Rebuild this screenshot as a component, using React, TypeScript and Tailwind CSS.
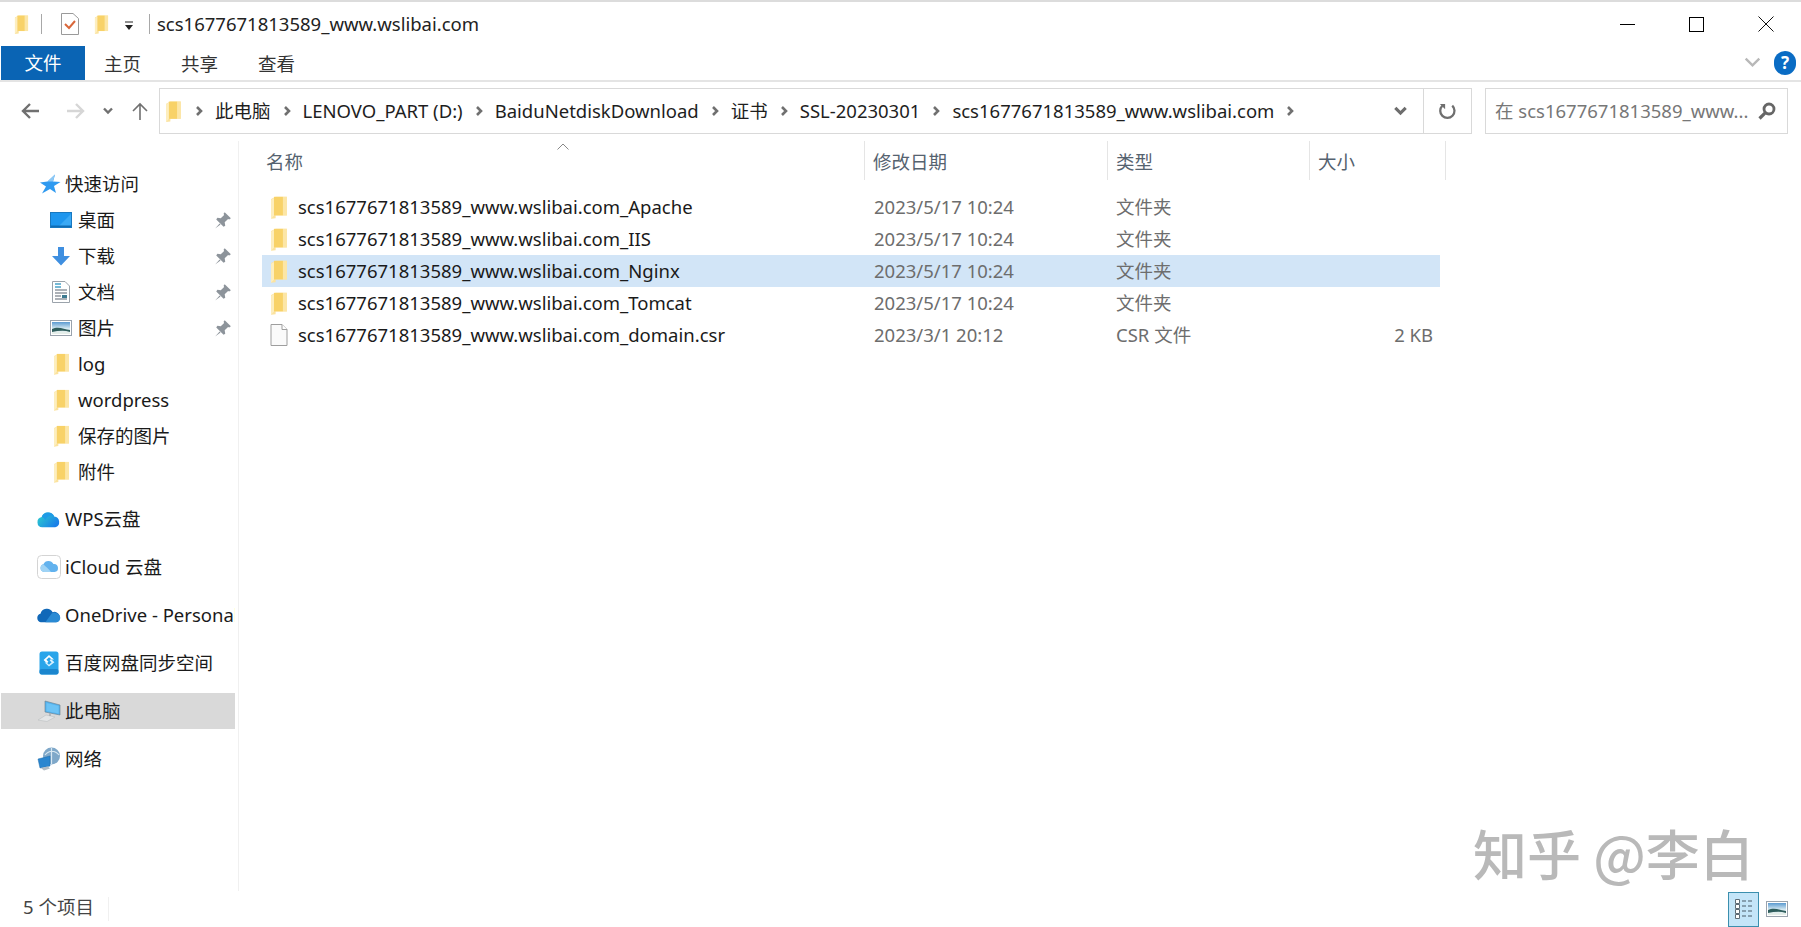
import React from "react";

const FONT = "[font-family:'Noto_Sans','Noto_Sans_CJK_SC',sans-serif]";

function Folder({ className = "" }: { className?: string }) {
  return (
    <svg viewBox="0 0 16 22" className={className} aria-hidden="true">
      <path d="M1 3.5 L5 1.5 L15 1.5 L15 18 L5 18 L5 20.5 L1 21 Z" fill="#fbe3a0" />
      <path d="M3.5 1.5 H11.5 V18 H3.5 Z" fill="#f8d268" />
      <path d="M11.5 1.5 H15 V18 H11.5 Z" fill="#fce6a6" />
      <path d="M1 4 L3.5 2.5 V18 L1 21 Z" fill="#fdeebf" />
    </svg>
  );
}

function FileIcon({ className = "" }: { className?: string }) {
  return (
    <svg viewBox="0 0 18 22" className={className} aria-hidden="true">
      <path d="M1 .5H12L17 5.5V21.5H1Z" fill="#fafafa" stroke="#9e9e9e" />
      <path d="M12 .5V5.5H17" fill="#fff" stroke="#9e9e9e" />
    </svg>
  );
}

function Chevron() {
  return (
    <svg viewBox="0 0 8 12" className="w-[8px] h-[12px] shrink-0" aria-hidden="true">
      <path d="M2 2 L6 6 L2 10" fill="none" stroke="#707070" strokeWidth="2.6" />
    </svg>
  );
}

function Pin() {
  return (
    <svg viewBox="0 0 16 16" className="w-[18px] h-[18px] shrink-0" aria-hidden="true">
      <path d="M9.5 1 L15 6.5 L13.5 7.5 L12.5 7 L9.5 10 L10 13 L8.5 14 L2 7.5 L3 6 L6 6.5 L9 3.5 L8.5 2.5 Z M5 11 L1 15.5 L5.8 12 Z" fill="#8d949b" />
    </svg>
  );
}

function Arrow({ dir, color }: { dir: "left" | "right" | "up"; color: string }) {
  const d =
    dir === "left"
      ? "M19 10H3M10 3L3 10L10 17"
      : dir === "right"
      ? "M1 10H17M10 3L17 10L10 17"
      : "M10 19V3M3 10L10 3L17 10";
  return (
    <svg viewBox="0 0 20 20" className="w-[20px] h-[20px]" aria-hidden="true">
      <path d={d} fill="none" stroke={color} strokeWidth={dir === "up" ? 1.6 : 2.4} />
    </svg>
  );
}

function SmallDown({ color = "#707070", w = 10, sw = 2.4 }: { color?: string; w?: number; sw?: number }) {
  return (
    <svg viewBox="0 0 10 8" style={{ width: w }} aria-hidden="true">
      <path d="M1 1.5 L5 5.5 L9 1.5" fill="none" stroke={color} strokeWidth={sw} />
    </svg>
  );
}

function Star() {
  return (
    <svg viewBox="0 0 22 20" className="w-[22px] h-[20px]" aria-hidden="true">
      <path d="M16 .5 L14 7.5 L21.5 8 L15 12 L17 19 L11 15 L3 19.5 L7 12.5 L1 8.5 L8.5 7.5 Z" fill="#2f9af0" />
      <path d="M16 .5 L14 7.5 L8.5 7.5 Z" fill="#8fc9f5" />
    </svg>
  );
}

function Desktop() {
  return (
    <svg viewBox="0 0 22 16" className="w-[22px] h-[16px]" aria-hidden="true">
      <rect x="0.5" y="0.5" width="21" height="15" fill="#1e96ee" stroke="#1878c0" />
      <path d="M8 15 L21 2 V15 Z" fill="#3aa9f5" />
      <rect x="1" y="13.5" width="20" height="1.5" fill="#0f6cb4" />
    </svg>
  );
}

function Download() {
  return (
    <svg viewBox="0 0 20 20" className="w-[20px] h-[20px]" aria-hidden="true">
      <path d="M7 1H13V10H19L10 19.5L1 10H7Z" fill="#3f8fe0" />
    </svg>
  );
}

function Doc() {
  return (
    <svg viewBox="0 0 18 22" className="w-[18px] h-[22px]" aria-hidden="true">
      <path d="M.5.5H13L17.5 5V21.5H.5Z" fill="#fff" stroke="#9ba3ab" />
      <path d="M3 3H9M3 6H9" stroke="#4aa3c8" strokeWidth="1.4" />
      <path d="M3 9H15M3 12H15M3 15H9M3 18H15" stroke="#5b6570" strokeWidth="1.2" />
      <rect x="10" y="14" width="5" height="3" fill="#3d7a90" />
    </svg>
  );
}

function Picture({ id }: { id: string }) {
  return (
    <svg viewBox="0 0 22 16" className="w-[22px] h-[16px]" aria-hidden="true">
      <defs>
        <linearGradient id={id} x1="0" y1="0" x2="0" y2="1">
          <stop offset="0" stopColor="#5b9ad0" />
          <stop offset="0.55" stopColor="#d6eaf2" />
          <stop offset="1" stopColor="#e8efe8" />
        </linearGradient>
      </defs>
      <rect x="0.5" y="0.5" width="21" height="15" fill="#fff" stroke="#9aa3ad" />
      <rect x="2" y="2" width="18" height="12" fill={`url(#${id})`} />
      <path d="M2 9 C8 6 14 9 20 10 V12 C14 10 8 11 2 12 Z" fill="#2f5d5c" />
    </svg>
  );
}

function WpsCloud() {
  return (
    <svg viewBox="0 0 24 16" className="w-[25px] h-[17px]" aria-hidden="true">
      <defs>
        <linearGradient id="wps" x1="0" y1="0" x2="1" y2="0.6">
          <stop offset="0" stopColor="#2ed3cc" />
          <stop offset="1" stopColor="#1a7fe8" />
        </linearGradient>
      </defs>
      <path d="M6 15.5 A5 5 0 0 1 5.5 5.6 A6.5 6.5 0 0 1 17.5 5 A5.4 5.4 0 0 1 18.5 15.5 Z" fill="url(#wps)" />
      <path d="M5.5 5.6 A6.5 6.5 0 0 1 17.5 5 A6 6 0 0 0 9 8.5 A5 5 0 0 0 5.5 5.6Z" fill="#1f9be6" />
    </svg>
  );
}

function ICloud() {
  return (
    <svg viewBox="0 0 24 24" className="w-[24px] h-[24px]" aria-hidden="true">
      <rect x="0.5" y="0.5" width="23" height="23" rx="4" fill="#fff" stroke="#d4d4d4" />
      <path d="M7 17 A4 4 0 0 1 6.4 9.2 A5.5 5.5 0 0 1 16.4 9 A4 4 0 0 1 17.5 17 Z" fill="#62b2ee" />
      <path d="M7 17 A4 4 0 0 1 6.4 9.2 C9 12 12 14 14 17 Z" fill="#9fd3f5" />
    </svg>
  );
}

function OneDrive() {
  return (
    <svg viewBox="0 0 24 15" className="w-[26px] h-[16px]" aria-hidden="true">
      <path d="M4.5 14.5 A4.3 4.3 0 0 1 4.3 6.2 A6.3 6.3 0 0 1 16 4.8 A5 5 0 0 1 19.5 14.5 Z" fill="#1168b8" />
      <path d="M9 14.5 L19.5 14.5 A4.2 4.2 0 0 0 21 6.6 A5 5 0 0 0 15 6 Z" fill="#2a8ad4" />
    </svg>
  );
}

function BaiduSync() {
  return (
    <svg viewBox="0 0 20 24" className="w-[20px] h-[24px]" aria-hidden="true">
      <rect x="0.5" y="0.5" width="19" height="23" rx="2.5" fill="#2aa5ea" />
      <rect x="0.5" y="18" width="19" height="5.5" rx="2" fill="#1b86ce" />
      <path d="M10 4 L15 8.5 L12.8 8.5 L10 6.2 L7.4 8.8 L9.4 10.8 L7.9 12.3 L4.6 9 Z" fill="#fff" />
      <path d="M10 15.6 L5.6 11.6 L7.5 11.6 L10 13.7 L12.6 11.2 L10.6 9.4 L12 8 L15.4 11.2 Z" fill="#d7f1ff" />
    </svg>
  );
}

function Computer() {
  return (
    <svg viewBox="0 0 24 22" className="w-[24px] h-[22px]" aria-hidden="true">
      <path d="M8 1 L23 5 V15 L8 12 Z" fill="#54b2ee" stroke="#6a7d8c" strokeWidth="0.6" />
      <path d="M9.5 3 L21.6 6 V13.4 L9.5 11 Z" fill="#6cc3f5" />
      <path d="M1 20 L9 15 L18 17 L10 21.5 Z" fill="#e3e5e6" stroke="#b7babd" strokeWidth="0.5" />
      <path d="M13 13 V16" stroke="#a8adb1" strokeWidth="1.5" />
    </svg>
  );
}

function Network() {
  return (
    <svg viewBox="0 0 24 24" className="w-[24px] h-[24px]" aria-hidden="true">
      <circle cx="14.5" cy="9" r="8.5" fill="#7fa8c9" />
      <path d="M8 8 C12 3 18 3 22 8 M14.5 1 V17" stroke="#d9e8f2" strokeWidth="1.2" fill="none" />
      <path d="M1 12 L13 9 V19 L3 21 Z" fill="#2a86d0" stroke="#1d6aa8" strokeWidth="0.5" />
      <path d="M4 21 L11 19.5 L13 21.5 L7 23.5 Z" fill="#b3bcc4" />
    </svg>
  );
}

const quick: { label: string; icon: React.ReactNode; pin?: boolean }[] = [
  { label: "桌面", icon: <Desktop />, pin: true },
  { label: "下载", icon: <Download />, pin: true },
  { label: "文档", icon: <Doc />, pin: true },
  { label: "图片", icon: <Picture id="side-pic" />, pin: true },
  { label: "log", icon: <Folder className="w-[17px] h-[24px]" /> },
  { label: "wordpress", icon: <Folder className="w-[17px] h-[24px]" /> },
  { label: "保存的图片", icon: <Folder className="w-[17px] h-[24px]" /> },
  { label: "附件", icon: <Folder className="w-[17px] h-[24px]" /> },
];

const roots: { label: string; icon: React.ReactNode; active?: boolean }[] = [
  { label: "WPS云盘", icon: <WpsCloud /> },
  { label: "iCloud 云盘", icon: <ICloud /> },
  { label: "OneDrive - Personal", icon: <OneDrive /> },
  { label: "百度网盘同步空间", icon: <BaiduSync /> },
  { label: "此电脑", icon: <Computer />, active: true },
  { label: "网络", icon: <Network /> },
];

const base = "scs1677671813589_www.wslibai.com";
const files = [
  { name: base + "_Apache", date: "2023/5/17 10:24", type: "文件夹", size: "" },
  { name: base + "_IIS", date: "2023/5/17 10:24", type: "文件夹", size: "" },
  { name: base + "_Nginx", date: "2023/5/17 10:24", type: "文件夹", size: "", selected: true },
  { name: base + "_Tomcat", date: "2023/5/17 10:24", type: "文件夹", size: "" },
  { name: base + "_domain.csr", date: "2023/3/1 20:12", type: "CSR 文件", size: "2 KB", file: true },
];

const crumbs = ["此电脑", "LENOVO_PART (D:)", "BaiduNetdiskDownload", "证书", "SSL-20230301", base];

export default function App() {
  return (
    <div className={`relative w-[1801px] h-[927px] overflow-hidden bg-white text-[18.5px] leading-[24px] text-[#1a1a1a] flex flex-col ${FONT}`}>
      {/* title bar */}
      <div className="h-[46px] shrink-0 border-t-2 border-[#dcdcdc] flex items-center pl-[14px]">
        <Folder className="w-[15px] h-[21px]" />
        <div className="w-px h-[20px] bg-[#a8a8a8] ml-[12px]" />
        <svg viewBox="0 0 18 22" className="w-[18px] h-[22px] ml-[19px]" aria-hidden="true">
          <path d="M.5.5H12L17.5 5.5V21.5H.5Z" fill="#fff" stroke="#9a9a9a" />
          <path d="M4 11L8 15L14 8" fill="none" stroke="#d9673a" strokeWidth="2" />
        </svg>
        <Folder className="w-[15px] h-[21px] ml-[15px]" />
        <svg viewBox="0 0 10 10" className="w-[10px] h-[10px] ml-[15px] mt-[4px]" aria-hidden="true">
          <path d="M1 1H9" stroke="#222" strokeWidth="1" />
          <path d="M1 4H9L5 9Z" fill="#222" />
        </svg>
        <div className="w-px h-[20px] bg-[#a8a8a8] ml-[15px]" />
        <span className="ml-[7px] text-[#222]">{base}</span>
        <div className="ml-auto flex items-center gap-[54px] pr-[27px]">
          <div className="w-[15px] h-px bg-black" />
          <div className="w-[15px] h-[15px] border border-black" />
          <svg viewBox="0 0 16 16" className="w-[16px] h-[16px]" aria-hidden="true">
            <path d="M.5.5L15.5 15.5M15.5.5L.5 15.5" stroke="#111" strokeWidth="1" />
          </svg>
        </div>
      </div>

      {/* ribbon tabs */}
      <div className="h-[36px] shrink-0 border-b-2 border-[#e4e4e4] flex items-start pl-px">
        <div className="w-[84px] h-[34px] bg-[#0a64b4] text-white flex items-center justify-center">文件</div>
        <div className="flex gap-[40px] pl-[19px] pt-[2px] h-[34px] items-center text-[#333]">
          <span>主页</span>
          <span>共享</span>
          <span>查看</span>
        </div>
        <div className="ml-auto flex items-center gap-[13px] h-[34px] pr-[5px]">
          <SmallDown color="#b8b8b8" w={17} sw={1.4} />
          <div className="w-[22px] h-[24px] rounded-full bg-[#0a6cc4] text-white flex items-center justify-center text-[17px] font-bold">?</div>
        </div>
      </div>

      {/* address row */}
      <div className="h-[59px] shrink-0 flex items-start pt-[6px] pl-[20px]">
        <div className="flex items-center h-[46px]">
          <Arrow dir="left" color="#707070" />
          <div className="w-[26px]" />
          <Arrow dir="right" color="#d6d6d6" />
          <div className="w-[15px] flex justify-center ml-[14px]"><SmallDown /></div>
          <div className="ml-[15px]"><Arrow dir="up" color="#707070" /></div>
        </div>
        <div className="ml-[9px] w-[1313px] h-[46px] border border-[#d9d9d9] flex items-center">
          <Folder className="w-[17px] h-[23px] ml-[5px] mr-[13px]" />
          {crumbs.map((c) => (
            <div key={c} className="flex items-center">
              <Chevron />
              <span className="mx-[12px] text-[#1e1e1e] whitespace-nowrap">{c}</span>
            </div>
          ))}
          <Chevron />
          <div className="ml-auto w-[46px] flex justify-center"><SmallDown color="#6d6d6d" w={13} /></div>
          <div className="w-[48px] h-full border-l border-[#d9d9d9] flex items-center justify-center">
            <svg viewBox="0 0 20 20" className="w-[19px] h-[19px]" aria-hidden="true">
              <path d="M4.5 4 A7.5 7.5 0 1 0 15 3.8" fill="none" stroke="#6f6f6f" strokeWidth="2.4" />
              <path d="M2 2 H7.5 V7.5 Z" fill="#6f6f6f" />
            </svg>
          </div>
        </div>
        <div className="ml-[13px] w-[303px] h-[46px] border border-[#d9d9d9] flex items-center pl-[9px] pr-[11px] text-[#777]">
          <span className="whitespace-nowrap">在 scs1677671813589_www...</span>
          <svg viewBox="0 0 18 18" className="w-[18px] h-[18px] ml-auto" aria-hidden="true">
            <circle cx="11" cy="7" r="5" fill="none" stroke="#666" strokeWidth="2.8" />
            <path d="M7.2 10.8L1.5 16.5" stroke="#666" strokeWidth="3.2" />
          </svg>
        </div>
      </div>

      {/* body */}
      <div className="flex flex-1 min-h-0">
        {/* nav pane */}
        <div className="w-[239px] h-[750px] shrink-0 border-r border-[#f0f0f0] pl-px">
          <div className="h-[25px]" />
          <div className="h-[36px] w-[234px] flex items-center">
            <div className="w-[64px] flex justify-end pr-[4px]"><Star /></div>
            <span>快速访问</span>
          </div>
          {quick.map((q) => (
            <div key={q.label} className="h-[36px] w-[234px] flex items-center">
              <div className="w-[77px] pl-[48px] pr-[5px] flex justify-center">{q.icon}</div>
              <span>{q.label}</span>
              {q.pin && <div className="ml-auto pr-[3px]"><Pin /></div>}
            </div>
          ))}
          <div className="h-[11px]" />
          {roots.map((r) => (
            <div
              key={r.label}
              className={`h-[36px] w-[234px] flex items-center mb-[12px] overflow-hidden ${r.active ? "bg-[#d9d9d9]" : ""}`}
            >
              <div className="w-[64px] shrink-0 pl-[35px] pr-[4px] flex justify-center">{r.icon}</div>
              <span className="whitespace-nowrap">{r.label}</span>
            </div>
          ))}
        </div>

        {/* file list */}
        <div className="flex-1 min-w-0 pl-[23px]">
          <div className="relative h-[39px] w-[1184px] flex items-center text-[#55626f]">
            <div className="w-[602px] h-full flex items-center pl-[4px] pt-[2px]">名称</div>
            <div className="w-[243px] h-full flex items-center pl-[8px] pt-[2px] border-l border-[#e5e5e5]">修改日期</div>
            <div className="w-[202px] h-full flex items-center pl-[8px] pt-[2px] border-l border-[#e5e5e5]">类型</div>
            <div className="w-[137px] h-full flex items-center pl-[8px] pt-[2px] border-x border-[#e5e5e5]">大小</div>
            <svg viewBox="0 0 12 7" className="absolute left-[295px] top-[2px] w-[12px] h-[7px]" aria-hidden="true">
              <path d="M.5 6.5L6 1L11.5 6.5" fill="none" stroke="#888" strokeWidth="1" />
            </svg>
          </div>
          <div className="h-[11px]" />
          {files.map((f) => (
            <div
              key={f.name}
              className={`h-[32px] w-[1178px] flex items-center ${f.selected ? "bg-[#d2e5f7]" : ""}`}
            >
              <div className="w-[36px] shrink-0 pl-[8px]">
                {f.file ? <FileIcon className="w-[18px] h-[22px]" /> : <Folder className="w-[18px] h-[25px]" />}
              </div>
              <span className="w-[576px] shrink-0 whitespace-nowrap text-[#1a1a1a]">{f.name}</span>
              <span className="w-[242px] shrink-0 text-[#6d6d6d]">{f.date}</span>
              <span className="w-[200px] shrink-0 text-[#6d6d6d]">{f.type}</span>
              <span className="w-[117px] shrink-0 text-right text-[#6d6d6d]">{f.size}</span>
            </div>
          ))}
        </div>
      </div>

      {/* status bar */}
      <div className="h-[36px] shrink-0 flex items-center pl-[23px] text-[#444]">
        <span className="w-[85px] pb-[4px]">5 个项目</span>
        <div className="w-px h-[24px] bg-[#f0f0f0]" />
        <div className="ml-auto flex items-center gap-[7px] pr-[13px]">
          <div className="w-[31px] h-[35px] border border-[#3b8fae] bg-[#c4e5f8] flex items-center justify-center">
            <svg viewBox="0 0 20 22" className="w-[20px] h-[22px]" aria-hidden="true">
              <path d="M8 3H12M14 3H18M8 8H12M14 8H18M8 13H12M14 13H18M8 18H12M14 18H18" stroke="#4a5a66" strokeWidth="1" />
              <path d="M1.5 1.5H5.5V5.5H1.5ZM1.5 6.5H5.5V10.5H1.5ZM1.5 11.5H5.5V15.5H1.5ZM1.5 16.5H5.5V20.5H1.5Z" fill="#fff" stroke="#5d6b75" strokeWidth="1" />
            </svg>
          </div>
          <Picture id="status-pic" />
        </div>
      </div>

      {/* watermark */}
      <div className="absolute left-[1473px] top-[819px] text-[54px] leading-[68px] font-medium text-[#b9b9b9] whitespace-nowrap [font-family:'Noto_Sans_CJK_SC','Noto_Sans',sans-serif]">
        知乎 @李白
      </div>
    </div>
  );
}
